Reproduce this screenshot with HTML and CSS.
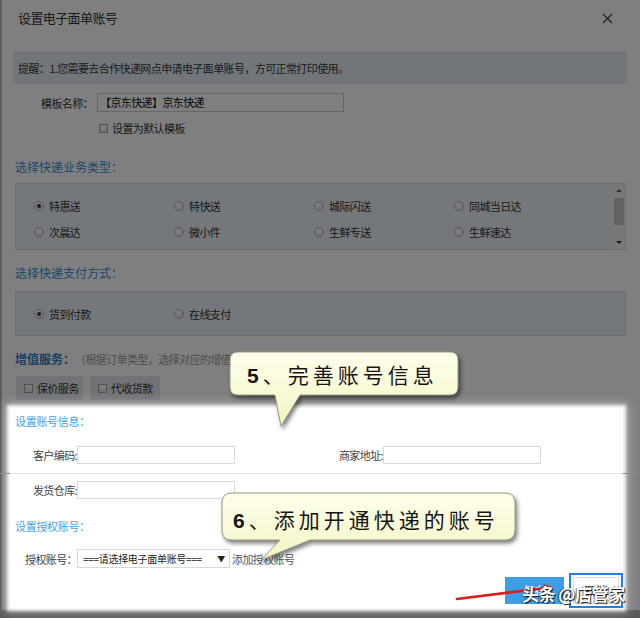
FILE: index.html
```html
<!DOCTYPE html>
<html lang="zh-CN">
<head>
    <meta charset="UTF-8">
    <meta name="viewport" content="width=device-width, initial-scale=1.0">
    <title>设置电子面单账号</title>
    <link rel="stylesheet" href="styles.css">
</head>
<body>
<div class="page">
    <div class="dialog">
        <div class="dlg-head">
            <span class="dlg-title">设置电子面单账号</span>
            <svg class="dlg-close" width="11" height="11" viewBox="0 0 11 11"><path d="M1 1L10 10M10 1L1 10" stroke="#444" stroke-width="1.3"/></svg>
        </div>
        <div class="dlg-body">
            <div class="tip">提醒：1.您需要去合作快递网点申请电子面单账号，方可正常打印使用。</div>
            <div class="tpl-row">
                <span class="tpl-label">模板名称：</span>
                <span class="field tpl-input">【京东快递】京东快递</span>
            </div>
            <div class="chk-row"><span class="chk"></span>设置为默认模板</div>

            <div class="sec-title sec-type">选择快递业务类型：</div>
            <div class="opt-box type-box">
                <div class="opt-grid">
                    <span class="opt"><span class="radio on"></span>特惠送</span>
                    <span class="opt"><span class="radio"></span>特快送</span>
                    <span class="opt"><span class="radio"></span>城际闪送</span>
                    <span class="opt"><span class="radio"></span>同城当日达</span>
                    <span class="opt"><span class="radio"></span>次晨达</span>
                    <span class="opt"><span class="radio"></span>微小件</span>
                    <span class="opt"><span class="radio"></span>生鲜专送</span>
                    <span class="opt"><span class="radio"></span>生鲜速达</span>
                </div>
                <div class="scrollbar">
                    <span class="sb-btn"><i class="up"></i></span>
                    <span class="sb-thumb"></span>
                    <span class="sb-track"></span>
                    <span class="sb-btn"><i class="down"></i></span>
                </div>
            </div>

            <div class="sec-title sec-pay">选择快递支付方式：</div>
            <div class="opt-box pay-box">
                <div class="opt-grid">
                    <span class="opt"><span class="radio on"></span>货到付款</span>
                    <span class="opt"><span class="radio"></span>在线支付</span>
                </div>
            </div>

            <div class="sec-title sec-extra"><b>增值服务：</b><span class="note">（根据订单类型，选择对应的增值服务）</span></div>
            <div class="extra-btns">
                <span class="xbtn"><span class="chk"></span>保价服务</span>
                <span class="xbtn wide"><span class="chk"></span>代收货款</span>
            </div>

            <div class="spot">
                <div class="spot-title">设置账号信息：</div>
                <div class="acct-row first">
                    <div class="acct-field"><span class="acct-label">客户编码:</span><span class="field acct-input"></span></div>
                    <div class="acct-field"><span class="acct-label">商家地址:</span><span class="field acct-input"></span></div>
                </div>
                <div class="acct-row second">
                    <div class="acct-field"><span class="acct-label">发货仓库:</span><span class="field acct-input"></span></div>
                </div>
                <div class="spot-title auth-title">设置授权账号：</div>
                <div class="auth-row">
                    <span class="acct-label">授权账号：</span>
                    <span class="field select">===请选择电子面单账号===<i>▼</i></span>
                    <span class="add-link">添加授权账号</span>
                </div>
                <div class="spot-foot">
                    <span class="btn btn-save">保存</span>
                    <span class="btn btn-cancel">取消</span>
                </div>
            </div>
        </div>
    </div>

    <div class="mask"></div>

    <div class="bubble b5">
        <svg width="240" height="82" viewBox="0 0 240 82">
            <defs>
                <linearGradient id="bg5" x1="0" y1="0" x2="0" y2="1">
                    <stop offset="0" stop-color="#ffffec"/>
                    <stop offset="1" stop-color="#f4f4c4"/>
                </linearGradient>
            </defs>
            <path d="M10 2H222Q230 2 230 10V37Q230 45 222 45H72L53 76L47 45H10Q2 45 2 37V10Q2 2 10 2Z" fill="url(#bg5)" stroke="#9a9a86" stroke-width="1"/>
        </svg>
        <div class="bubble-text"><b>5</b>、完善账号信息</div>
    </div>

    <div class="bubble b6">
        <svg width="300" height="72" viewBox="0 0 300 72">
            <defs>
                <linearGradient id="bg6" x1="0" y1="0" x2="0" y2="1">
                    <stop offset="0" stop-color="#ffffec"/>
                    <stop offset="1" stop-color="#f4f4c4"/>
                </linearGradient>
            </defs>
            <path d="M12 2H285Q295 2 295 12V39Q295 49 285 49H90L41 69L60 49H12Q2 49 2 39V12Q2 2 12 2Z" fill="url(#bg6)" stroke="#9a9a86" stroke-width="1"/>
        </svg>
        <div class="bubble-text"><b>6</b>、添加开通快递的账号</div>
    </div>

    <svg class="arrow" width="110" height="28" viewBox="0 0 110 28">
        <path d="M7 21L95 10" stroke="#dd1c1c" stroke-width="2.5" stroke-linecap="round"/>
        <polygon points="103,9 94.6,14.1 93.6,6.2" fill="#dd1c1c"/>
    </svg>

    <div class="watermark">头条 @店管家</div>
</div>
</body>
</html>
```

FILE: styles.css
```css
body {
    margin: 0;
    font-family: "Noto Sans CJK SC", "Liberation Sans", sans-serif;
    font-size: 11px;
    line-height: 16px;
    color: #333;
}
.page {
    position: relative;
    width: 640px;
    height: 618px;
    overflow: hidden;
    background: #b0b0b0;
}
.dialog {
    height: 610px;
    box-sizing: border-box;
    background: #fff;
    border-left: 2px solid #b8b8b8;
}
.dlg-head {
    height: 36px;
    display: flex;
    align-items: center;
    justify-content: space-between;
    padding: 0 27px 0 16px;
}
.dlg-title {
    font-size: 13px;
    letter-spacing: -0.6px;
    color: #333;
}
.dlg-body {
    padding: 15px 13px 0 11px;
}
.tip {
    height: 33px;
    display: flex;
    align-items: center;
    padding-left: 5px;
    background: #e4ecf6;
    letter-spacing: -0.6px;
    color: #3a3a3a;
}
.tpl-row {
    display: flex;
    align-items: center;
    margin-top: 9px;
}
.tpl-label {
    width: 80px;
    text-align: right;
    letter-spacing: -0.6px;
}
.field {
    box-sizing: border-box;
    height: 19px;
    border: 1px solid #ccc;
    background: #fff;
}
.tpl-input {
    width: 247px;
    margin-left: 4px;
    padding-left: 2px;
    line-height: 17px;
    letter-spacing: -0.6px;
    color: #111;
}
.chk-row {
    display: flex;
    align-items: center;
    height: 14px;
    margin: 9px 0 0 86px;
    letter-spacing: -0.6px;
}
.chk {
    width: 9px;
    height: 9px;
    box-sizing: border-box;
    border: 1px solid #a0a0a0;
    background: linear-gradient(#fff, #e2e2e2);
    margin-right: 4px;
    flex: none;
}
.sec-title {
    height: 16px;
    padding-left: 2px;
    font-size: 12px;
    color: #3b8fd9;
}
.sec-type {
    margin-top: 24px;
}
.opt-box {
    display: flex;
    box-sizing: border-box;
    margin: 8px 1px 0 2px;
    border: 1px solid #d3dbe6;
    background: #e8eef6;
}
.type-box {
    height: 67px;
}
.opt-grid {
    flex: 1;
    display: grid;
    grid-template-columns: repeat(4, 140px);
    grid-auto-rows: 26px;
    align-items: center;
    padding: 9px 0 0 18px;
}
.opt {
    display: flex;
    align-items: center;
    gap: 5px;
    letter-spacing: -0.6px;
}
.radio {
    position: relative;
    width: 10px;
    height: 10px;
    box-sizing: border-box;
    border-radius: 50%;
    border: 1px solid #b0b0b0;
    background: radial-gradient(circle at 40% 35%, #fff, #d8d8d8);
}
.radio.on::after {
    content: "";
    position: absolute;
    left: 2px;
    top: 2px;
    width: 4px;
    height: 4px;
    border-radius: 50%;
    background: #333;
}
.scrollbar {
    width: 12px;
    display: flex;
    flex-direction: column;
    background: #f1f1f1;
}
.sb-btn {
    height: 13px;
    display: flex;
    align-items: center;
    justify-content: center;
}
.sb-btn i {
    width: 0;
    height: 0;
    border-left: 3px solid transparent;
    border-right: 3px solid transparent;
}
.sb-btn i.up {
    border-bottom: 3px solid #666;
}
.sb-btn i.down {
    border-top: 3px solid #333;
}
.sb-thumb {
    height: 27px;
    margin: 1px 1px 0;
    background: #c4c4c4;
}
.sb-track {
    flex: 1;
}
.sec-pay {
    margin-top: 15px;
}
.pay-box {
    height: 45px;
    margin-top: 10px;
    align-items: center;
}
.pay-box .opt-grid {
    padding-top: 0;
}
.sec-extra {
    margin-top: 15px;
    display: flex;
    align-items: center;
}
.sec-extra b {
    color: #2f80cf;
}
.sec-extra .note {
    font-size: 11px;
    color: #9a9a9a;
    letter-spacing: -0.6px;
}
.extra-btns {
    display: flex;
    gap: 7px;
    margin: 9px 0 0 3px;
}
.xbtn {
    width: 67px;
    height: 24px;
    box-sizing: border-box;
    display: flex;
    align-items: center;
    padding-left: 8px;
    background: #e2e7ed;
    letter-spacing: -0.6px;
}
.xbtn.wide {
    width: 70px;
}

/* highlighted part */
.spot {
    position: relative;
    z-index: 6;
    width: 613px;
    height: 200px;
    box-sizing: border-box;
    margin: 8px 0 0 -3px;
    padding-top: 5px;
    background: #fff;
    box-shadow: 0 0 3px 3px rgba(255, 255, 255, 0.9), 0 0 10px 5px rgba(255, 255, 255, 0.35);
}
.spot-title {
    height: 16px;
    padding-left: 5px;
    color: #45a2e6;
    letter-spacing: -0.3px;
}
.acct-row {
    position: relative;
    display: grid;
    grid-template-columns: 306px 306px;
    padding-left: 5px;
}
.acct-row.first {
    padding: 17px 0 9px 5px;
    border-bottom: 1px solid #e3e3e3;
}
.acct-row.first::before,
.acct-row.first::after {
    content: "";
    position: absolute;
    bottom: -1px;
    height: 1px;
    background: #8c8c8c;
}
.acct-row.first::before {
    left: -10px;
    width: 10px;
}
.acct-row.first::after {
    right: -17px;
    width: 17px;
}
.acct-row.second {
    padding-top: 7px;
}
.acct-field {
    display: flex;
    align-items: center;
}
.acct-label {
    width: 62px;
    text-align: right;
    color: #444;
    letter-spacing: -0.6px;
}
.acct-input {
    width: 158px;
    height: 18px;
    border-color: #d8d8d8;
}
.auth-title {
    margin-top: 19px;
}
.auth-row {
    display: flex;
    align-items: center;
    margin-top: 15px;
    padding-left: 5px;
}
.select {
    width: 153px;
    display: flex;
    align-items: center;
    justify-content: space-between;
    padding: 0 4px 0 5px;
    border-color: #d8d8d8;
    font-size: 10px;
    letter-spacing: -0.3px;
    color: #222;
}
.select i {
    font-style: normal;
    font-size: 8px;
}
.add-link {
    margin-left: 2px;
    color: #555;
    letter-spacing: -0.6px;
}
.spot-foot {
    display: flex;
    justify-content: flex-end;
    gap: 9px;
    margin-top: 9px;
    padding-right: 4px;
}
.btn {
    height: 27px;
    box-sizing: border-box;
    display: flex;
    align-items: center;
    justify-content: center;
    font-size: 12px;
}
.btn-save {
    width: 59px;
    background: #3d9ee6;
    color: #fff;
}
.btn-cancel {
    width: 46px;
    background: #fff;
    border: 1px solid #ddd;
    outline: 2px solid #1f80ea;
    outline-offset: 2px;
}

.mask {
    position: absolute;
    inset: 0;
    z-index: 5;
    background: rgba(0, 0, 0, 0.5);
}
.bubble {
    position: absolute;
    z-index: 7;
}
.bubble svg {
    position: absolute;
    left: 0;
    top: 0;
    filter: drop-shadow(2px 3px 2px rgba(0, 0, 0, 0.5));
}
.bubble-text {
    position: relative;
    font-size: 21px;
    letter-spacing: 4px;
    color: #151515;
    white-space: nowrap;
}
.bubble-text b {
    font-family: "Liberation Sans", sans-serif;
    font-weight: bold;
}
.b5 {
    left: 228px;
    top: 350px;
    width: 240px;
    height: 82px;
}
.b5 .bubble-text {
    padding: 2px 0 0 19px;
    line-height: 44px;
}
.b6 {
    left: 220px;
    top: 491px;
    width: 300px;
    height: 72px;
}
.b6 .bubble-text {
    padding: 5px 0 0 13px;
    line-height: 47px;
}
.arrow {
    position: absolute;
    left: 450px;
    top: 578px;
    z-index: 8;
}
.watermark {
    position: absolute;
    left: 522px;
    top: 583px;
    z-index: 9;
    font-size: 17px;
    line-height: 22px;
    font-weight: bold;
    letter-spacing: -0.5px;
    color: #fff;
    text-shadow: 1px 1px 1px rgba(0, 0, 0, 0.9), -1px 0 1px rgba(0, 0, 0, 0.5);
}
```
